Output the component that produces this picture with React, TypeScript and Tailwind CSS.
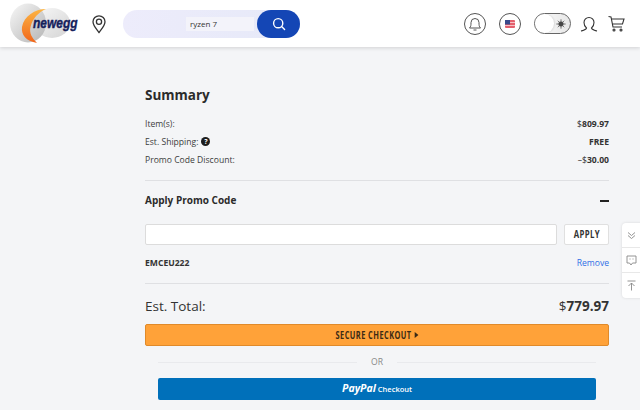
import React from "react";

const openSans = "font-['Open_Sans',sans-serif]";

function Logo() {
  return (
    <div className="relative h-[42px] w-[76px]">
      <svg width="76" height="42" viewBox="0 0 76 42" className="absolute left-0 top-0">
        <defs>
          <linearGradient id="g1" x1="0" y1="0" x2="1" y2="1">
            <stop offset="0" stopColor="#f8f8f8" />
            <stop offset="1" stopColor="#b4b4b4" />
          </linearGradient>
          <linearGradient id="g2" x1="0" y1="0" x2="1" y2="1">
            <stop offset="0" stopColor="#f8f8f8" />
            <stop offset="1" stopColor="#d4d4d4" />
          </linearGradient>
          <linearGradient id="g3" x1="0" y1="0" x2="0" y2="1">
            <stop offset="0" stopColor="#fcb544" />
            <stop offset="1" stopColor="#f1651a" />
          </linearGradient>
        </defs>
        <ellipse cx="43" cy="21" rx="18" ry="15" fill="url(#g2)" />
        <ellipse cx="19" cy="21" rx="18" ry="19.5" fill="url(#g1)" />
        <path d="M37 7 C26 7 15 14 13 25 C12 33 17 39 28 41 C23 36 20 31 21.5 25 C23.5 16 30 10 37 7Z" fill="url(#g3)" />
      </svg>
      <span className="absolute left-[24px] top-[13px] origin-left scale-x-[0.8] text-[15px] font-bold italic leading-[16px] text-[#14215c] [-webkit-text-stroke:0.4px_#14215c] font-['Liberation_Sans',sans-serif]">
        newegg
      </span>
    </div>
  );
}

function Row({ label, value, help, dollar }: { label: string; value: string; help?: boolean; dollar?: string }) {
  return (
    <div className="flex h-[18px] items-center justify-between">
      <span className="flex items-center gap-[3px] text-[8.6px] text-[#3d3d3d]">
        {label}
        {help && (
          <span className="flex h-[9px] w-[9px] items-center justify-center rounded-full bg-[#1c1c1c] text-[7px] font-bold leading-none text-white">
            ?
          </span>
        )}
      </span>
      <span className="text-[8.6px] font-bold text-[#333]">
        {dollar && <span className="font-normal">{dollar}</span>}
        {value}
      </span>
    </div>
  );
}

export default function App() {
  return (
    <div className={`relative h-[410px] w-[640px] overflow-hidden bg-[#f4f5f7] ${openSans}`}>
      <header className="flex h-[47px] items-center bg-white shadow-[0_1px_4px_rgba(0,0,0,0.15)]">
        <div className="ml-[9px] mt-[-1px]">
          <Logo />
        </div>
        <svg className="ml-[6px]" width="16" height="20" viewBox="0 0 16 20" fill="none" stroke="#333" strokeWidth="1.3">
          <path d="M8 18.5 C5 14.5 2 11.5 2 7.8 A6 6 0 0 1 14 7.8 C14 11.5 11 14.5 8 18.5Z" />
          <circle cx="8" cy="7.8" r="2.6" />
        </svg>
        <div className="ml-[16px] flex h-[28px] w-[177px] items-center justify-end rounded-full bg-gradient-to-r from-[#edecfb] to-[#e6e9f8]">
          <div className="mr-[3px] flex h-[14px] w-[68px] items-center bg-[#f3f3fa] pl-[4px] text-[8px] text-[#333]">
            ryzen 7
          </div>
          <div className="flex h-[28px] w-[43px] items-center justify-center rounded-full bg-[#1446b5]">
            <svg width="14" height="14" viewBox="0 0 14 14" fill="none" stroke="white" strokeWidth="1.4">
              <circle cx="6.2" cy="6.2" r="4.6" />
              <path d="M9.6 9.6 L12.6 12.6" strokeLinecap="round" />
            </svg>
          </div>
        </div>
        <div className="ml-[164px] flex h-[22px] w-[22px] items-center justify-center rounded-full border border-[#555]">
          <svg width="16" height="16" viewBox="0 0 16 16" fill="none" stroke="#555" strokeWidth="1">
            <path d="M2.5 12 C4 10.5 4 9 4 6.5 A4 4 0 0 1 12 6.5 C12 9 12 10.5 13.5 12Z" />
            <path d="M6.5 14 H9.5" />
          </svg>
        </div>
        <div className="ml-[13px] flex h-[22px] w-[22px] items-center justify-center rounded-full border border-[#555]">
          <svg width="10" height="8" viewBox="0 0 10 8">
            <rect width="10" height="8" rx="1" fill="#e4606d" />
            <rect y="2" width="10" height="1" fill="#f4c0c5" />
            <rect y="5" width="10" height="1" fill="#f4c0c5" />
            <rect width="5" height="4.5" fill="#3a4a8c" />
          </svg>
        </div>
        <div className="relative ml-[13px] h-[21px] w-[37px] overflow-hidden rounded-full border border-[#666] bg-gradient-to-r from-white to-[#e6e6e6]">
          <span className="absolute left-0 top-0 h-[19px] w-[19px] rounded-full bg-white shadow-[1px_0_2px_rgba(0,0,0,0.1)]" />
          <svg className="absolute right-[4px] top-[5px]" width="10" height="10" viewBox="0 0 11 11" stroke="#444" strokeWidth="1" fill="#444">
            <circle cx="5.5" cy="5.5" r="2.5" />
            <path d="M5.5 0.5V2M5.5 9V10.5M0.5 5.5H2M9 5.5H10.5M2 2L3 3M8 8L9 9M2 9L3 8M8 3L9 2" />
          </svg>
        </div>
        <svg className="ml-[9px]" width="18" height="18" viewBox="0 0 18 18" fill="none" stroke="#333" strokeWidth="1.1">
          <path d="M1 16 C3 15.5 6 15 6.5 13 C4.5 11.5 4 9.5 4 7.5 A5 5 0 0 1 14 7.5 C14 9.5 13.5 11.5 11.5 13 C12 15 15 15.5 17 16" />
        </svg>
        <svg className="ml-[10px]" width="17" height="18" viewBox="0 0 17 18" fill="none" stroke="#333" strokeWidth="1.1">
          <path d="M0.5 1.5 L3 2 L5 12 H14" />
          <path d="M3.4 4 H16 L14.5 9 H4.4" />
          <circle cx="6" cy="15" r="1" />
          <circle cx="13" cy="15" r="1" />
        </svg>
      </header>

      <main className="ml-[145px] w-[464px] pt-[39px]">
        <h1 className="h-[18px] text-[13.5px] font-bold leading-[18px] text-[#2b2b2b]">Summary</h1>
        <div className="mt-[11px]">
          <Row label="Item(s):" value="809.97" dollar="$" />
          <Row label="Est. Shipping:" value="FREE" help />
          <Row label="Promo Code Discount:" value="30.00" dollar="–$" />
        </div>
        <div className="mt-[11px] border-t border-[#dfe0e3]" />
        <div className="flex h-[39px] items-center justify-between">
          <span className="text-[10px] font-bold text-[#2b2b2b]">Apply Promo Code</span>
          <span className="h-[2px] w-[9px] bg-[#222]" />
        </div>
        <div className="mt-[4px] flex gap-[7px]">
          <div className="h-[21px] w-[412px] rounded-[2px] border border-[#dcdcdc] bg-white" />
          <div className="flex h-[21px] flex-1 items-center justify-center rounded-[2px] border border-[#e0e0e0] bg-white">
            <span className="inline-block scale-x-[0.78] text-[10px] font-bold tracking-[0.5px] text-[#333]">APPLY</span>
          </div>
        </div>
        <div className="mt-[8px] flex h-[20px] items-center justify-between">
          <span className="text-[8.6px] font-bold text-[#333]">EMCEU222</span>
          <span className="text-[8.6px] text-[#2f6fe6]">Remove</span>
        </div>
        <div className="mt-[10px] border-t border-[#dfe0e3]" />
        <div className="mt-[11px] flex h-[22px] items-center justify-between text-[#333]">
          <span className="text-[13.5px]">Est. Total:</span>
          <span className="text-[13.5px] font-bold">
            <span className="font-normal">$</span>779.97
          </span>
        </div>
        <div className="mt-[7px] flex h-[22px] items-center justify-center rounded-[2px] border border-[#e08a2a] bg-[#ffa239]">
          <span className="inline-flex scale-x-[0.74] items-center text-[10px] font-bold tracking-[0.6px] text-[#3a2a15]">
            SECURE CHECKOUT
            <span className="ml-[4px] h-0 w-0 border-y-[3.5px] border-l-[5px] border-y-transparent border-l-[#3a2a15]" />
          </span>
        </div>
        <div className="mx-[13px] mt-[11px] flex h-[10px] items-center gap-[14px]">
          <span className="flex-1 border-t border-[#e9eaed]" />
          <span className="text-[8.6px] text-[#888]">OR</span>
          <span className="flex-1 border-t border-[#e9eaed]" />
        </div>
        <div className="mx-[13px] mt-[11px] flex h-[22px] items-center justify-center rounded-[2px] bg-[#0070ba] text-white">
          <span className="text-[10.5px] font-bold italic">PayPal</span>
          <span className="ml-[2px] mt-[1px] text-[7.5px] font-semibold">Checkout</span>
        </div>
      </main>

      <aside className="absolute left-[622px] top-[223px] flex h-[75px] w-[24px] flex-col rounded-[4px] bg-white pr-[6px] shadow-[0_0_3px_rgba(0,0,0,0.12)]">
        <div className="flex h-[25px] items-center justify-center border-b border-[#e8e8e8]">
          <svg width="9" height="9" viewBox="0 0 9 9" fill="none" stroke="#888" strokeWidth="0.9">
            <path d="M1 1.5 L4.5 4.5 L8 1.5M1 4.5 L4.5 7.5 L8 4.5" />
          </svg>
        </div>
        <div className="flex h-[25px] items-center justify-center border-b border-[#e8e8e8]">
          <svg width="11" height="11" viewBox="0 0 11 11" fill="none" stroke="#888" strokeWidth="0.9">
            <path d="M1 1 H10 V8 H6.5 L5 10 L3.5 8 H1Z" />
            <path d="M4 3.5 V4.5 M7 3.5 V4.5" />
          </svg>
        </div>
        <div className="flex h-[25px] items-center justify-center">
          <svg width="9" height="11" viewBox="0 0 9 11" fill="none" stroke="#888" strokeWidth="0.9">
            <path d="M0.5 1 H8.5 M4.5 10.5 V3 M1.5 6 L4.5 3 L7.5 6" />
          </svg>
        </div>
      </aside>
    </div>
  );
}
